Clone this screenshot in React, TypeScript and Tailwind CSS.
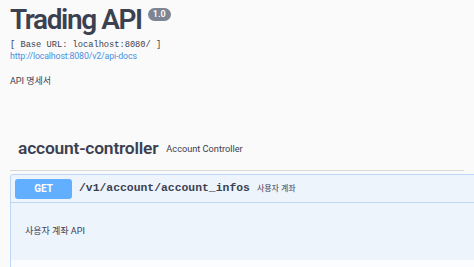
export default function App() {
  const sans = { fontFamily: 'Roboto, "Noto Sans CJK KR", sans-serif' };
  const mono = { fontFamily: '"Liberation Mono", monospace' };
  return (
    <div className="w-[474px] h-[267px] overflow-hidden bg-[#fafafa] px-[10px] text-[#3b4151]" style={sans}>
      <div>
        <div className="flex items-start h-[40px]">
          <h2 className="text-[28px] font-semibold leading-[40px] text-[#3b4151] tracking-[-1.4px]">Trading API</h2>
          <span className="ml-[6px] mt-[8px] h-[13px] px-[5px] rounded-[7px] bg-[#7d8492] text-white text-[9px] font-semibold leading-[13px]">1.0</span>
        </div>
        <div className="text-[8.7px] leading-[10px] text-[#3b4151]" style={mono}>[ Base URL: localhost:8080/ ]</div>
        <div className="text-[8.8px] leading-[12px] tracking-[-0.15px] text-[#4990e2]">http://localhost:8080/v2/api-docs</div>
        <div className="text-[9px] leading-[12px] mt-[13px] text-[#3b4151]">API 명세서</div>
      </div>
      <div className="mt-[40px] border-b border-[#d6d8dc] flex items-center pl-[8px] h-[44px]">
        <span className="text-[17.4px] font-semibold text-[#3b4151] leading-none tracking-[-0.2px]">account-controller</span>
        <span className="ml-[8px] text-[9.2px] text-[#3b4151] mt-[1px]">Account Controller</span>
      </div>
      <div className="mt-[3px] border border-[#bcd8f6] rounded-[3px] bg-[#edf4fc] w-[480px]">
        <div className="flex items-center h-[28px] px-[4px] border-b border-[#bcd8f6]">
          <span className="w-[57px] h-[20px] rounded-[3px] bg-[#61affe] text-white text-[10px] font-bold flex items-center justify-center">GET</span>
          <span className="ml-[7px] text-[11.4px] font-bold text-[#3b4151]" style={mono}>/v1/account/account_infos</span>
          <span className="ml-[7px] text-[8px] text-[#3b4151]">사용자 계좌</span>
        </div>
        <div className="h-[57px] flex items-center px-[14px]">
          <span className="text-[9px] text-[#3b4151]">사용자 계좌 API</span>
        </div>
        <div className="h-[20px] bg-[#fafcff]"></div>
      </div>
    </div>
  );
}
